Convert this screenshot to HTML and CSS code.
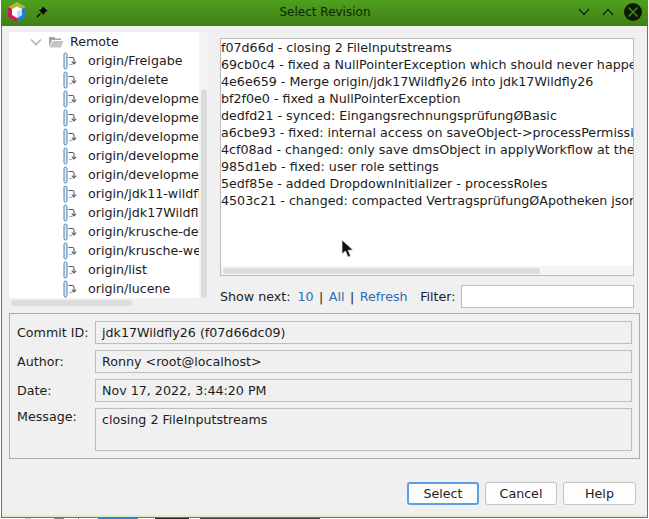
FILE: index.html
```html
<!DOCTYPE html>
<html lang="en">
<head>
    <meta charset="UTF-8">
    <meta name="viewport" content="width=device-width, initial-scale=1.0">
    <title>Select Revision</title>
    <link rel="stylesheet" href="styles.css">
</head>
<body>
    <div class="window">
        <header class="titlebar">
            <div class="title-left">
                <svg class="app-icon" width="18" height="20" viewBox="0 0 18 20">
                    <polygon points="9,0 18,5 9,10 0,5" fill="#a9b93a"/>
                    <polygon points="0,5 9,10 9,20 0,15" fill="#d4175a"/>
                    <polygon points="18,5 9,10 9,20 18,15" fill="#1f7fd0"/>
                    <polygon points="9,4.5 14,7 14,13 9,16 4,13 4,7" fill="#fff"/>
                    <polygon points="9,9.5 14,7 14,13 9,16" fill="#bcdcf4"/>
                </svg>
                <svg class="pin-icon" width="12" height="12" viewBox="0 0 12 12">
                    <path d="M7 0.5 L11.5 5 L10 5.6 L8.4 7 L7.8 9 L3 4.2 L5 3.6 L6.4 2 Z" fill="#000"/>
                    <path d="M4.5 7.5 L1 11" stroke="#000" stroke-width="1.2"/>
                </svg>
            </div>
            <span class="title-text">Select Revision</span>
            <div class="title-right">
                <svg width="12" height="8" viewBox="0 0 12 8"><path d="M1 1 L6 6.5 L11 1" class="win-stroke"/></svg>
                <svg width="12" height="8" viewBox="0 0 12 8"><path d="M1 7 L6 1.5 L11 7" class="win-stroke"/></svg>
                <svg class="close-icon" width="18" height="18" viewBox="0 0 18 18">
                    <circle cx="9" cy="9" r="9" fill="#0b1a06"/>
                    <path d="M4.5 4.5 L13.5 13.5 M13.5 4.5 L4.5 13.5" stroke="#4a8f1e" stroke-width="1.4"/>
                </svg>
            </div>
        </header>

        <div class="content">
            <div class="top">
                <div class="tree-pane">
                    <div class="tree-row-wrap">
                        <ul class="tree">
                            <li class="tree-root">
                                <svg class="chevron" width="12" height="8" viewBox="0 0 12 8"><path d="M1 1.5 L6 6.5 L11 1.5" fill="none" stroke="#b4b4b4" stroke-width="1.6"/></svg>
                                <svg class="folder" width="16" height="12" viewBox="0 0 16 12">
                                    <path d="M1 1 H6 L7.5 2.5 H13 V4 H4 L1 11 Z" fill="#a4a4a4"/>
                                    <path d="M4.5 5 H15.5 L13 11.5 H1.5 Z" fill="#c4c4c4"/>
                                </svg>
                                <span>Remote</span>
                            </li>
                            <li><svg class="branch"><use href="#branch-icon"/></svg>origin/Freigabe</li>
                            <li><svg class="branch"><use href="#branch-icon"/></svg>origin/delete</li>
                            <li><svg class="branch"><use href="#branch-icon"/></svg>origin/developme</li>
                            <li><svg class="branch"><use href="#branch-icon"/></svg>origin/developme</li>
                            <li><svg class="branch"><use href="#branch-icon"/></svg>origin/developme</li>
                            <li><svg class="branch"><use href="#branch-icon"/></svg>origin/developme</li>
                            <li><svg class="branch"><use href="#branch-icon"/></svg>origin/developme</li>
                            <li><svg class="branch"><use href="#branch-icon"/></svg>origin/jdk11-wildfly</li>
                            <li><svg class="branch"><use href="#branch-icon"/></svg>origin/jdk17Wildfly</li>
                            <li><svg class="branch"><use href="#branch-icon"/></svg>origin/krusche-dev</li>
                            <li><svg class="branch"><use href="#branch-icon"/></svg>origin/krusche-we</li>
                            <li><svg class="branch"><use href="#branch-icon"/></svg>origin/list</li>
                            <li><svg class="branch"><use href="#branch-icon"/></svg>origin/lucene</li>
                        </ul>
                        <div class="vscroll"><div class="vscroll-thumb"></div></div>
                    </div>
                    <div class="hscroll tree-hscroll"><div class="hscroll-thumb"></div></div>
                </div>

                <div class="rev-pane">
                    <div class="rev-list">
                        <ul class="revisions">
                            <li>f07d66d - closing 2 FileInputstreams</li>
                            <li>69cb0c4 - fixed a NullPointerException which should never happen</li>
                            <li>4e6e659 - Merge origin/jdk17Wildfly26 into jdk17Wildfly26</li>
                            <li>bf2f0e0 - fixed a NullPointerException</li>
                            <li>dedfd21 - synced: EingangsrechnungsprüfungØBasic</li>
                            <li>a6cbe93 - fixed: internal access on saveObject-&gt;processPermissions</li>
                            <li>4cf08ad - changed: only save dmsObject in applyWorkflow at the end</li>
                            <li>985d1eb - fixed: user role settings</li>
                            <li>5edf85e - added DropdownInitializer - processRoles</li>
                            <li>4503c21 - changed: compacted VertragsprüfungØApotheken json</li>
                        </ul>
                        <div class="hscroll rev-hscroll"><div class="hscroll-thumb"></div></div>
                    </div>
                    <div class="show-row">
                        <span>Show next:</span>
                        <a href="#">10</a>
                        <span>|</span>
                        <a href="#">All</a>
                        <span>|</span>
                        <a href="#">Refresh</a>
                        <label class="filter-label">Filter:</label>
                        <input class="filter-input" type="text">
                    </div>
                </div>
            </div>

            <section class="details">
                <div class="field"><label>Commit ID:</label><div class="value">jdk17Wildfly26 (f07d66dc09)</div></div>
                <div class="field"><label>Author:</label><div class="value">Ronny &lt;root@localhost&gt;</div></div>
                <div class="field"><label>Date:</label><div class="value">Nov 17, 2022, 3:44:20 PM</div></div>
                <div class="field field-message"><label>Message:</label><div class="value">closing 2 FileInputstreams</div></div>
            </section>

            <footer class="buttons">
                <button class="btn btn-default">Select</button>
                <button class="btn">Cancel</button>
                <button class="btn">Help</button>
            </footer>
        </div>

        <svg class="cursor" width="14" height="20" viewBox="0 0 14 20">
            <path d="M1 1 L1 15 L4.5 12 L7 18 L9.5 17 L7.2 11.2 L12 11 Z" fill="#111" stroke="#ddd" stroke-width="0.8"/>
        </svg>
    </div>

    <!-- what shows of the window behind, under the dialog -->
    <svg class="behind" width="649" height="1" viewBox="0 0 649 1">
        <rect x="25" width="6" height="1" fill="#ccc"/>
        <rect x="54" width="10" height="1" fill="#888"/>
        <rect x="78" width="1" height="1" fill="#888"/>
        <rect x="98" width="40" height="1" fill="#3b7dd8"/>
        <rect x="155" width="34" height="1" fill="#222"/>
        <rect x="200" width="120" height="1" fill="#444"/>
    </svg>

    <svg class="defs" width="0" height="0">
        <symbol id="branch-icon" viewBox="0 0 14 18">
            <rect x="1" y="1" width="3" height="16" rx="1.5" fill="#dfeaf5" stroke="#4f82b0" stroke-width="1"/>
            <path d="M5.5 5.5 H9.5 Q11 5.5 11 7.5 V11.5" fill="none" stroke="#4f5a64" stroke-width="1.1"/>
            <path d="M8.8 9.6 L11 12 L13.2 9.6" fill="none" stroke="#4f5a64" stroke-width="1.1"/>
            <path d="M6 12.5 H9.5" stroke="#a8b2bb" stroke-width="1.2"/>
        </symbol>
    </svg>
</body>
</html>
```

FILE: styles.css
```css
* {
    margin: 0;
    padding: 0;
    box-sizing: border-box;
}

body {
    font-family: 'DejaVu Sans', sans-serif;
    font-size: 12.67px;
    color: #1c1c1c;
    background-color: #fff;
    height: 519px;
    overflow: hidden;
}

/* window frame */
.window {
    position: relative;
    width: 647px;
    height: 518px;
    margin-left: 1px;
    display: flex;
    flex-direction: column;
    border: 1px solid #4a9420;
    border-top: none;
    background-color: #f0f0f0;
    box-shadow: inset 0 -2px 0 #d8f0c8;
}

.titlebar {
    height: 26px;
    flex: none;
    display: grid;
    grid-template-columns: 1fr auto 1fr;
    align-items: center;
    padding: 0 6px 2px 7px;
    margin: 0 -1px;
    background: linear-gradient(#4fa01e, #3f7f16);
}

.title-left,
.title-right {
    display: flex;
    align-items: center;
}

.title-left {
    gap: 10px;
}

.title-right {
    justify-content: flex-end;
    gap: 12px;
}

.close-icon {
    margin-left: -2px;
}

.title-text {
    font-size: 12px;
    color: #10240a;
}

.win-stroke {
    fill: none;
    stroke: #10240a;
    stroke-width: 1.2;
}

.content {
    flex: 1;
    display: flex;
    flex-direction: column;
    padding: 6px 7px 12px 7px;
}

/* branch tree and revision list */
.top {
    display: flex;
    height: 281px;
}

.tree-pane {
    width: 200px;
    flex: none;
}

.tree-row-wrap {
    display: flex;
    height: 266px;
}

.tree {
    list-style: none;
    width: 190px;
    background-color: #fff;
    overflow: hidden;
}

.tree li {
    height: 19px;
    display: flex;
    align-items: center;
    padding-left: 54px;
    white-space: nowrap;
}

.tree .tree-root {
    padding-left: 21px;
}

.chevron {
    margin-right: 6px;
}

.folder {
    margin-right: 6px;
}

.branch {
    width: 14px;
    height: 18px;
    margin-right: 11px;
    flex: none;
}

.vscroll {
    width: 10px;
    background-color: #f4f4f4;
    padding: 57px 2px 0;
}

.vscroll-thumb {
    height: 209px;
    background-color: #dcdcdc;
    border-radius: 3px;
}

.hscroll-thumb {
    height: 6px;
    background-color: #dcdcdc;
    border-radius: 3px;
}

.tree-hscroll {
    padding: 2px 0 0 2px;
}

.tree-hscroll .hscroll-thumb {
    width: 121px;
}

.rev-pane {
    flex: 1;
    min-width: 0;
    padding: 6px 6px 0 11px;
    display: flex;
    flex-direction: column;
}

.rev-list {
    height: 238px;
    flex: none;
    border: 1px solid #bcbcbc;
    background-color: #fff;
    display: flex;
    flex-direction: column;
}

.revisions {
    flex: 1;
    list-style: none;
    overflow: hidden;
}

.revisions li {
    height: 17px;
    line-height: 17px;
    white-space: nowrap;
}

.rev-hscroll {
    height: 9px;
    flex: none;
    background-color: #f4f4f4;
    padding: 2px 0 0 2px;
}

.rev-hscroll .hscroll-thumb {
    width: 317px;
}

.show-row {
    display: flex;
    align-items: center;
    margin-top: 9px;
    height: 23px;
    gap: 5.5px;
    white-space: nowrap;
}

.show-row a {
    color: #2a6cb4;
    text-decoration: none;
}

.show-row a:first-of-type {
    margin-left: 1.5px;
}

.filter-label {
    margin-left: 7px;
}

.filter-input {
    flex: 1;
    min-width: 0;
    height: 23px;
    border: 1px solid #bcbcbc;
    background-color: #fff;
}

/* commit details */
.details {
    height: 146px;
    flex: none;
    margin-top: 0;
    border: 1px solid #aaa;
    padding: 7px 7px 6px 7px;
    display: flex;
    flex-direction: column;
    gap: 6px;
}

.field {
    display: flex;
    align-items: center;
    height: 23px;
    flex: none;
}

.field label {
    width: 78px;
    flex: none;
}

.value {
    flex: 1;
    height: 100%;
    display: flex;
    align-items: center;
    padding-left: 6px;
    border: 1px solid #bcbcbc;
}

.field-message {
    height: 43px;
    align-items: flex-start;
}

.field-message label {
    padding-top: 1px;
}

.field-message .value {
    align-items: flex-start;
    padding-top: 3px;
}

/* bottom buttons */
.buttons {
    display: flex;
    justify-content: flex-end;
    gap: 6px;
    margin-top: auto;
    padding-right: 4px;
}

.btn {
    width: 72px;
    height: 23px;
    font-family: inherit;
    font-size: 12.67px;
    color: #1c1c1c;
    background-color: #fdfdfd;
    border: 1px solid #c4c4c4;
    border-radius: 3px;
}

.btn:last-child {
    width: 73px;
}

.btn-default {
    border: 2px solid #5ba0e4;
}

/* mouse pointer over the list */
.cursor {
    position: absolute;
    left: 339px;
    top: 239px;
}

.behind {
    display: block;
}

.defs {
    position: absolute;
}
```
